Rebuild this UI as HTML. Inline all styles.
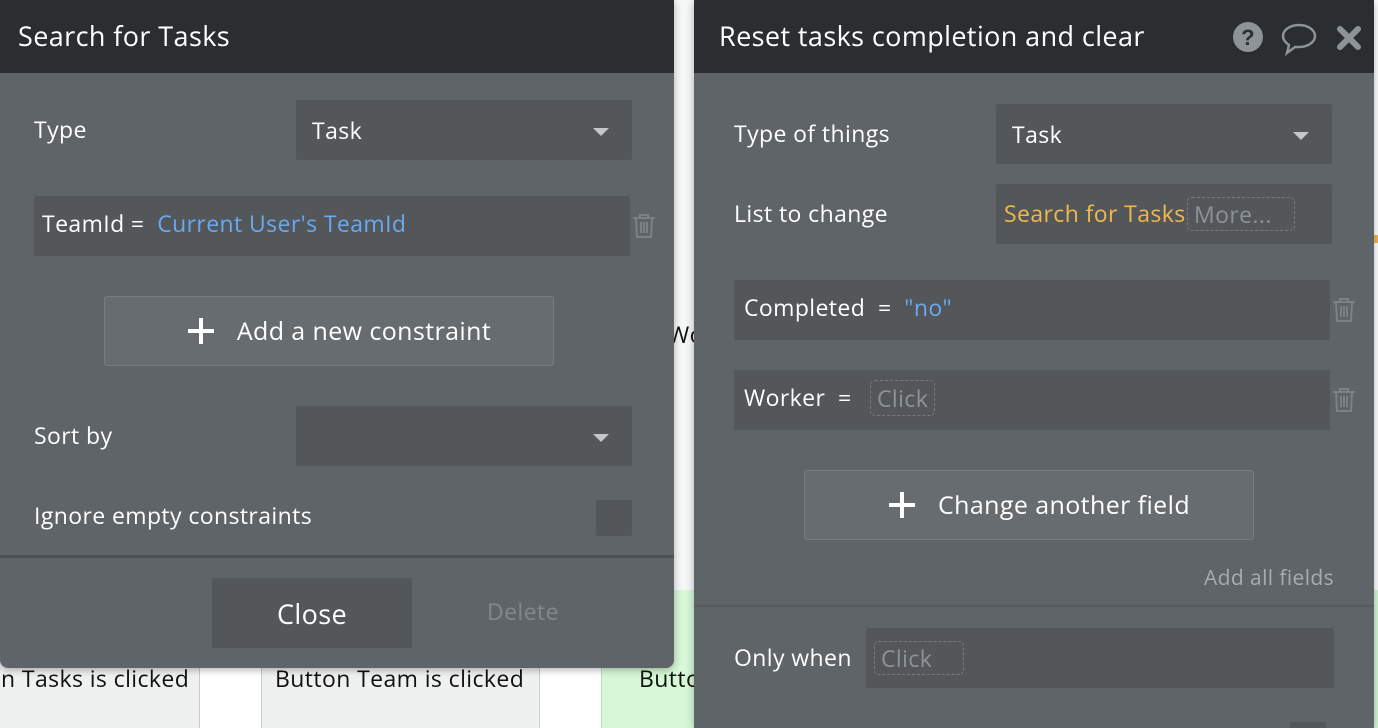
<!DOCTYPE html>
<html><head><meta charset="utf-8"><style>
*{box-sizing:border-box;margin:0;padding:0}
body{width:1378px;height:728px;overflow:hidden;background:#fff;position:relative;font-family:"Open Sans","Liberation Sans",sans-serif;font-size:23px;letter-spacing:0.4px;color:#fff}
.a{position:absolute}
.hdr{background:#2a2e31;height:73px}
.body{background:#5f6468}
.inp{background:#53575a;border-radius:2px}
.lbl{color:#fff}
.btn{background:#676c70;border:1px solid #777c80;border-radius:3px;color:#fff;font-size:25px;display:flex;align-items:center;justify-content:center;padding-left:20px}
.tri{width:0;height:0;border-left:8px solid transparent;border-right:8px solid transparent;border-top:8px solid #c4c6c8}
.dash{border:1px dashed #777c80;border-radius:5px;color:#8e9397;padding:0 6px}
.cell{position:absolute;top:590px;height:138px;background:#eff1f0;border-left:1px solid #c9cdcc;border-right:1px solid #c9cdcc;color:#111}
</style></head><body>
<div class="a" style="left:674px;top:204px;width:20px;height:3px;background:#c9cfd0"></div>
<div class="a" style="left:674px;top:235px;width:20px;height:8px;background:#f2b85c"></div>
<div class="a" style="left:1374px;top:235px;width:4px;height:8px;background:#f2b85c"></div>
<div class="a" style="left:674px;top:0;width:20px;height:590px;background:#f6f7f7"></div>
<div class="a" style="left:0;top:590px;width:1378px;height:138px;background:#fff"></div>
<div class="cell" style="left:-10px;width:210px"><span class="a" style="left:10px;top:72px">n Tasks is clicked</span></div>
<div class="cell" style="left:261px;width:279px"><span class="a" style="left:13px;top:72px">Button Team is clicked</span></div>
<div class="cell" style="left:601px;width:100px;background:#d6f8d6;border-color:#b9dcb9"><span class="a" style="left:37px;top:72px">Butto</span></div>
<div class="a" style="left:1374px;top:590px;width:4px;height:138px;background:#d6f8d6"></div>
<div class="a" style="left:640px;top:0;color:#111">on</div>
<div class="a" style="left:668px;top:318px;color:#111">Wo</div>

<div class="a" style="left:0;top:0;width:674px;height:668px;border-radius:0 0 8px 8px;overflow:hidden;box-shadow:0 2px 8px rgba(0,0,0,.3)">
 <div class="hdr a" style="left:0;top:0;width:674px"><span class="a" style="left:18px;top:17px;font-size:27px">Search for Tasks</span></div>
 <div class="body a" style="left:0;top:73px;width:674px;height:595px"></div>
 <span class="a lbl" style="left:34px;top:113px">Type</span>
 <div class="a inp" style="left:296px;top:100px;width:336px;height:60px"><span class="a" style="left:16px;top:14px">Task</span><div class="a tri" style="left:297px;top:28px"></div></div>
 <div class="a inp" style="left:34px;top:196px;width:596px;height:60px"><span class="a" style="left:8px;top:11px">TeamId =&nbsp; <span style="color:#6aa9f2">Current User's TeamId</span></span></div>
 <svg class="a" style="left:631px;top:212px" width="26" height="28" viewBox="0 0 26 28" fill="none" stroke="#7c8185" stroke-width="2"><path d="M2 6h22M9 6V3h8v3M5 6l1 19h14l1-19M10 10v11M13 10v11M16 10v11"/></svg>
 <div class="a btn" style="left:104px;top:296px;width:450px;height:70px"><svg width="28" height="28" viewBox="0 0 28 28" style="margin-right:22px"><path d="M14 1v26M1 14h26" stroke="#fff" stroke-width="4"/></svg>Add a new constraint</div>
 <span class="a lbl" style="left:34px;top:419px">Sort by</span>
 <div class="a inp" style="left:296px;top:406px;width:336px;height:60px"><div class="a tri" style="left:297px;top:28px"></div></div>
 <span class="a lbl" style="left:34px;top:499px">Ignore empty constraints</span>
 <div class="a inp" style="left:596px;top:500px;width:36px;height:36px"></div>
 <div class="a" style="left:0;top:555px;width:674px;height:3px;background:#4d5154"></div>
 <div class="a" style="left:212px;top:578px;width:200px;height:70px;background:#53575a;display:flex;align-items:center;justify-content:center;font-size:27px">Close</div>
 <span class="a" style="left:487px;top:595px;color:#83888c">Delete</span>
</div>

<div class="a" style="left:694px;top:0;width:680px;height:728px;overflow:hidden;box-shadow:0 2px 8px rgba(0,0,0,.3)">
 <div class="hdr a" style="left:0;top:0;width:680px"><span class="a" style="left:25px;top:17px;font-size:27px">Reset tasks completion and clear</span>
  <svg class="a" style="left:538px;top:21px" width="32" height="32" viewBox="0 0 32 32"><circle cx="16" cy="16" r="15" fill="#8e9397"/><text x="16" y="24" text-anchor="middle" font-family="Liberation Sans" font-weight="bold" font-size="22" fill="#2a2e31">?</text></svg>
  <svg class="a" style="left:586px;top:22px" width="38" height="34" viewBox="0 0 38 34" fill="none" stroke="#8e9397" stroke-width="2.5"><path d="M19 3C10 3 3 8 3 14c0 4 3 7 6 9l-2 8 8-6c1 0 3 0 4 0 9 0 16-5 16-11S28 3 19 3z"/></svg>
  <svg class="a" style="left:642px;top:25px" width="26" height="26" viewBox="0 0 26 26" stroke="#8e9397" stroke-width="6" stroke-linecap="round"><path d="M4 4L22 22M22 4L4 22"/></svg>
 </div>
 <div class="body a" style="left:0;top:73px;width:680px;height:655px"></div>
 <span class="a lbl" style="left:40px;top:117px">Type of things</span>
 <div class="a inp" style="left:302px;top:104px;width:336px;height:60px"><span class="a" style="left:16px;top:14px">Task</span><div class="a tri" style="left:297px;top:28px"></div></div>
 <span class="a lbl" style="left:40px;top:197px">List to change</span>
 <div class="a inp" style="left:302px;top:184px;width:336px;height:60px"><span class="a" style="left:8px;top:13px;color:#f2b84b">Search for Tasks</span><span class="a dash" style="left:191px;top:13px;height:34px;line-height:32px;width:108px">More...</span></div>
 <div class="a inp" style="left:40px;top:280px;width:596px;height:60px"><span class="a" style="left:10px;top:11px">Completed&nbsp; =&nbsp; <span style="color:#6aa9f2">"no"</span></span></div>
 <svg class="a" style="left:637px;top:296px" width="26" height="28" viewBox="0 0 26 28" fill="none" stroke="#7c8185" stroke-width="2"><path d="M2 6h22M9 6V3h8v3M5 6l1 19h14l1-19M10 10v11M13 10v11M16 10v11"/></svg>
 <div class="a inp" style="left:40px;top:370px;width:596px;height:60px"><span class="a" style="left:10px;top:11px">Worker&nbsp; =</span><span class="a dash" style="left:136px;top:10px;height:36px;line-height:34px">Click</span></div>
 <svg class="a" style="left:637px;top:386px" width="26" height="28" viewBox="0 0 26 28" fill="none" stroke="#7c8185" stroke-width="2"><path d="M2 6h22M9 6V3h8v3M5 6l1 19h14l1-19M10 10v11M13 10v11M16 10v11"/></svg>
 <div class="a btn" style="left:110px;top:470px;width:450px;height:70px"><svg width="28" height="28" viewBox="0 0 28 28" style="margin-right:22px"><path d="M14 1v26M1 14h26" stroke="#fff" stroke-width="4"/></svg>Change another field</div>
 <span class="a" style="left:510px;top:564px;color:#a9adb0;font-size:21px">Add all fields</span>
 <div class="a" style="left:0;top:605px;width:680px;height:2px;background:#575b5e"></div>
 <span class="a lbl" style="left:40px;top:641px">Only when</span>
 <div class="a inp" style="left:172px;top:628px;width:468px;height:60px"><span class="a dash" style="left:8px;top:13px;height:34px;line-height:32px;width:90px">Click</span></div>
 <div class="a inp" style="left:596px;top:722px;width:36px;height:36px"></div>
</div>
</body></html>
